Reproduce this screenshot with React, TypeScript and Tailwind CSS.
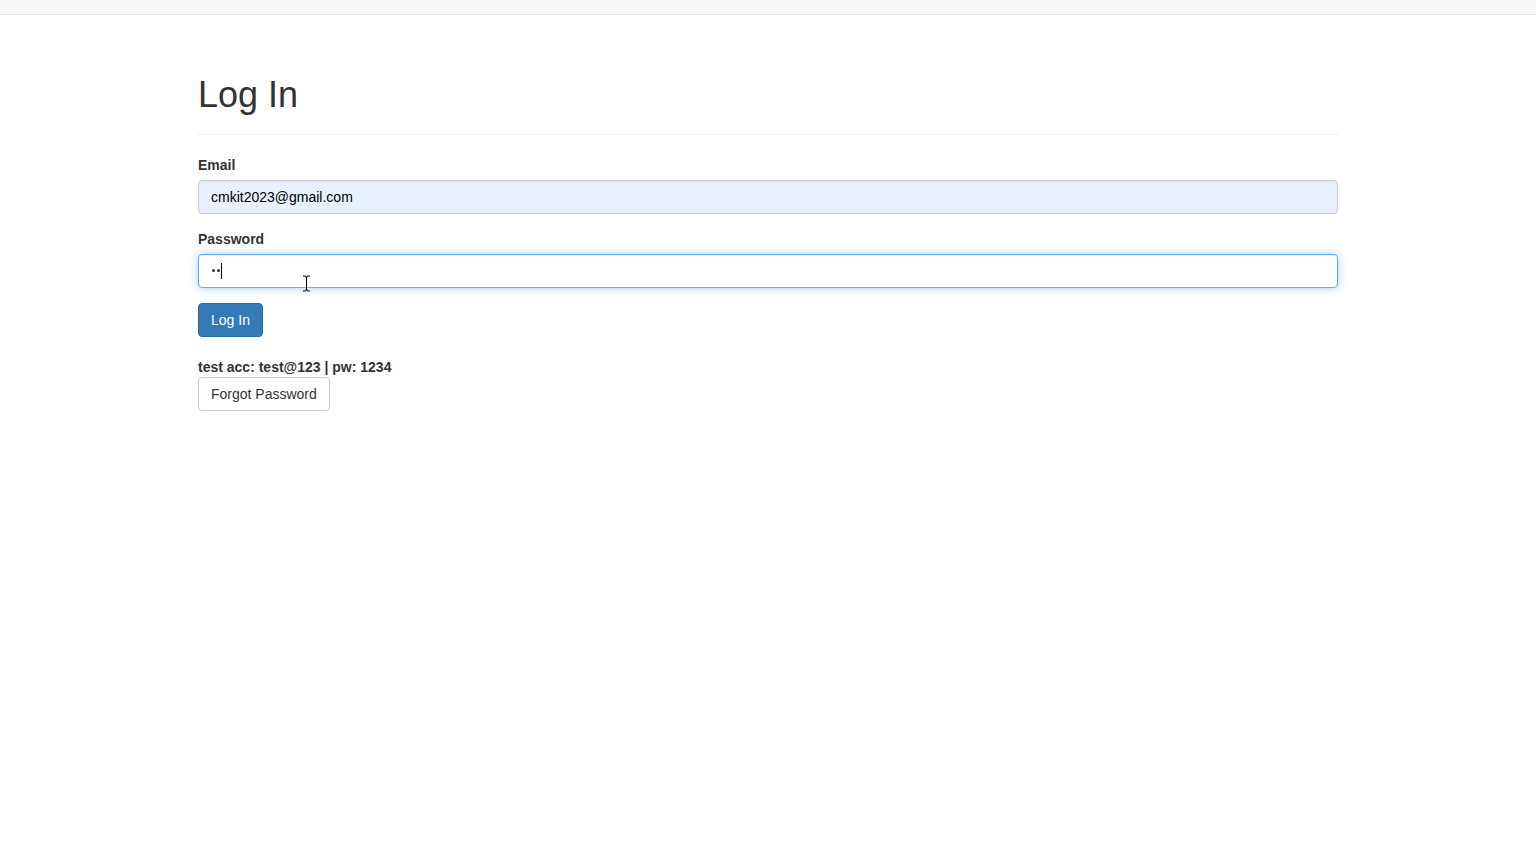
import React from "react";

export default function App() {
  return (
    <div className="relative min-h-[864px] bg-white text-[#333] font-['Liberation_Sans',Arial,sans-serif] text-[14px] leading-[20px]">
      <div className="h-[15px] bg-[#f8f8f8] border-b border-[#e7e7e7]" />
      <div className="w-[1140px] mx-auto">
        <div className="mt-[60px] pb-[9px] border-b border-[#eee]">
          <h1 className="text-[36px] leading-[39.6px] mb-[10px] font-normal">Log In</h1>
        </div>
        <div className="mt-[20px]">
          <div className="mb-[15px]">
            <div className="font-bold mb-[5px]">Email</div>
            <div className="h-[34px] px-[12px] py-[6px] border border-[#ccc] rounded-[4px] bg-[#e8f0fe] text-black shadow-[inset_0_1px_1px_rgba(0,0,0,0.075)]">
              cmkit2023@gmail.com
            </div>
          </div>
          <div className="mb-[15px]">
            <div className="font-bold mb-[5px]">Password</div>
            <div className="h-[34px] px-[12px] flex items-center border border-[#66afe9] rounded-[4px] bg-white shadow-[inset_0_1px_1px_rgba(0,0,0,0.075),0_0_8px_rgba(102,175,233,0.6)]">
              <span className="flex items-center gap-[2px] ml-[1px]">
                <span className="w-[3px] h-[3px] rounded-full bg-[#333]" />
                <span className="w-[3px] h-[3px] rounded-full bg-[#333]" />
              </span>
              <span className="ml-[1px] w-[1px] h-[16px] bg-black" />
            </div>
          </div>
          <button className="h-[34px] px-[12px] rounded-[4px] bg-[#337ab7] border border-[#2e6da4] text-white">
            Log In
          </button>
          <div className="mt-[20px] font-bold">test acc: test@123 | pw: 1234</div>
          <button className="h-[34px] px-[12px] rounded-[4px] bg-white border border-[#ccc] text-[#333]">
            Forgot Password
          </button>
        </div>
      </div>
      <svg className="absolute left-[302px] top-[275px]" width="9" height="17" viewBox="0 0 9 17">
        <path d="M1 1h2.5M5.5 1H8M4.5 1.5v14M1 16h2.5M5.5 16H8M3 1.5l1.5 0.8M6 1.5l-1.5 0.8M3 15.5l1.5-0.8M6 15.5l-1.5-0.8" stroke="#000" strokeWidth="1" fill="none" />
      </svg>
    </div>
  );
}
